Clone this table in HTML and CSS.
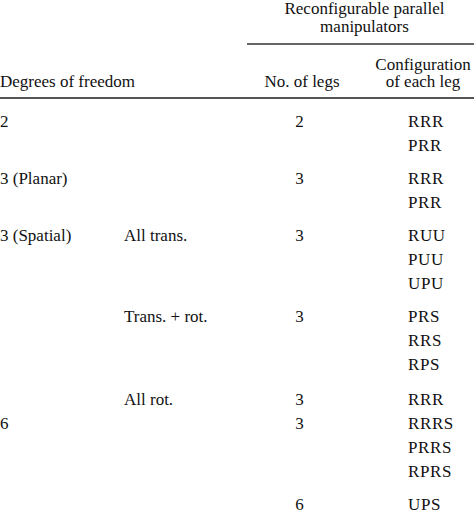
FILE: index.html
```html
<!DOCTYPE html>
<html lang="en">
<head>
<meta charset="utf-8">
<title>Reconfigurable parallel manipulators</title>
<link rel="stylesheet" href="styles.css">
</head>
<body>
<div class="table">
  <div class="head">
    <div class="span-head">Reconfigurable parallel<br>manipulators</div>
    <div class="h-dof">Degrees of freedom</div>
    <div class="h-legs">No. of legs</div>
    <div class="h-conf">Configuration<br>of each leg</div>
  </div>
  <div class="body">
    <div class="group">
      <div class="c1">2</div><div class="c2"></div><div class="c3">2</div>
      <div class="c4"><div>RRR</div><div>PRR</div></div>
    </div>
    <div class="group">
      <div class="c1">3 (Planar)</div><div class="c2"></div><div class="c3">3</div>
      <div class="c4"><div>RRR</div><div>PRR</div></div>
    </div>
    <div class="group">
      <div class="c1">3 (Spatial)</div><div class="c2">All trans.</div><div class="c3">3</div>
      <div class="c4"><div>RUU</div><div>PUU</div><div>UPU</div></div>
    </div>
    <div class="group">
      <div class="c1"></div><div class="c2">Trans. + rot.</div><div class="c3">3</div>
      <div class="c4"><div>PRS</div><div>RRS</div><div>RPS</div></div>
    </div>
    <div class="group group-rot">
      <div class="c1"></div><div class="c2">All rot.</div><div class="c3">3</div>
      <div class="c4"><div>RRR</div></div>
    </div>
    <div class="group group-tight">
      <div class="c1">6</div><div class="c2"></div><div class="c3">3</div>
      <div class="c4"><div>RRRS</div><div>PRRS</div><div>RPRS</div></div>
    </div>
    <div class="group">
      <div class="c1"></div><div class="c2"></div><div class="c3">6</div>
      <div class="c4"><div>UPS</div></div>
    </div>
  </div>
</div>
</body>
</html>
```

FILE: styles.css
```css
html, body {
  margin: 0;
  padding: 0;
  background: #ffffff;
  overflow: hidden;
}

.table {
  width: 490px;
  font-family: "Liberation Serif", "Times New Roman", serif;
  font-size: 17px;
  color: #111111;
}

.head {
  display: grid;
  grid-template-columns: 124px 124px 108px 134px;
  border-bottom: 2px solid #555555;
}

.span-head {
  grid-column: 3 / 5;
  grid-row: 1;
  text-align: center;
  line-height: 18px;
  padding: 0 8px 7px 0;
  border-bottom: 2px solid #666666;
  margin-left: -1px;
}

.h-dof {
  grid-column: 1 / 3;
  grid-row: 2;
  align-self: end;
  line-height: 17px;
  padding-bottom: 7px;
}

.h-legs {
  grid-column: 3;
  grid-row: 2;
  align-self: end;
  text-align: center;
  line-height: 17px;
  padding-bottom: 7px;
}

.h-conf {
  grid-column: 4;
  grid-row: 2;
  text-align: center;
  line-height: 17px;
  padding: 11px 0 7px 0;
}

.body {
  padding-top: 2px;
}

.group {
  display: grid;
  grid-template-columns: 124px 124px 108px 134px;
  line-height: 24px;
  padding-top: 9px;
}

.group-rot {
  padding-top: 11px;
}

.group-tight {
  padding-top: 0;
}

.c3 {
  text-align: center;
  padding-right: 5px;
}

.c4 {
  padding-left: 52px;
  letter-spacing: 0.6px;
}
```
